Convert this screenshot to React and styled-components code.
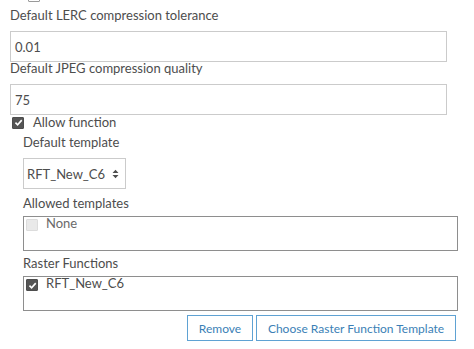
import React from "react";
import styled, { createGlobalStyle } from "styled-components";

const GlobalStyle = createGlobalStyle`
  body {
    margin: 0;
    background: #fff;
    color: #4d4d4d;
    font-family: Lato, "Open Sans", "Liberation Sans", sans-serif;
    font-size: 13px;
    overflow: hidden;
  }
`;

const Panel = styled.div`
  display: flex;
  flex-direction: column;
  align-items: flex-start;
  padding-left: 10px;
`;

const Box = styled.span`
  box-sizing: border-box;
  display: inline-flex;
  align-items: center;
  justify-content: center;
  flex: none;
  width: 12px;
  height: 12px;
  border: 1px solid ${(p) => (p.$checked ? "#4d4d4d" : p.$disabled ? "#dcdcdc" : "#9a9a9a")};
  background: ${(p) => (p.$checked ? "#555" : p.$disabled ? "#e9e9e9" : "#fff")};
  border-radius: 1px;
`;

const Check = ({ checked, disabled }) => (
  <Box $checked={checked} $disabled={disabled}>
    {checked && (
      <svg width="9" height="9" viewBox="0 0 10 10">
        <path d="M1.6 5.2 L4 7.6 L8.6 2.4" fill="none" stroke="#fff" strokeWidth="1.8" />
      </svg>
    )}
  </Box>
);

const TopCheck = styled.div`
  margin: -10px 0 0 18px;
  display: flex;
`;

const Label = styled.div`
  line-height: 13px;
  white-space: nowrap;
  margin-top: ${(p) => p.$top || 0}px;
  margin-bottom: ${(p) => p.$bottom ?? 9}px;
`;

const TextInput = styled.div`
  box-sizing: border-box;
  width: 437px;
  height: 31px;
  border: 1px solid #cbcbcb;
  padding-left: 4px;
  display: flex;
  align-items: center;
`;

const CheckRow = styled.label`
  display: flex;
  align-items: center;
  gap: 9px;
  margin: 1px 0 0 2px;
  line-height: 13px;
`;

const Nested = styled.div`
  display: flex;
  flex-direction: column;
  align-items: flex-start;
  margin-left: 13px;
  width: 435px;
`;

const Select = styled.div`
  box-sizing: border-box;
  width: 103px;
  height: 31px;
  border: 1px solid #cbcbcb;
  padding: 0 6px 0 3px;
  display: flex;
  align-items: center;
  justify-content: space-between;
`;

const List = styled.div`
  box-sizing: border-box;
  width: 435px;
  height: 35px;
  border: 1px solid #8e8e8e;
  padding: 0 2px;
`;

const ListItem = styled.div`
  display: flex;
  align-items: flex-start;
  gap: 8px;
  line-height: 13px;
  color: ${(p) => (p.$disabled ? "#6a6a6a" : "#4d4d4d")};

  & > span:first-child {
    margin-top: 2px;
  }
`;

const Actions = styled.div`
  align-self: stretch;
  display: flex;
  justify-content: flex-end;
  gap: 3px;
  margin: 4px 2px 0 0;
`;

const Button = styled.button`
  box-sizing: border-box;
  height: 26px;
  width: ${(p) => p.$w}px;
  padding: 0;
  white-space: nowrap;
  background: #fff;
  border: 1px solid #5fa2d3;
  color: #3b7fb6;
  font-family: inherit;
  font-size: 12px;
`;

const Arrows = () => (
  <svg width="7" height="10" viewBox="0 0 7 10">
    <path d="M0.5 4 L3.5 0.8 L6.5 4 Z M0.5 6 L3.5 9.2 L6.5 6 Z" fill="#4d4d4d" />
  </svg>
);

export default function App() {
  return (
    <>
      <GlobalStyle />
      <Panel>
        <TopCheck>
          <Check />
        </TopCheck>
        <Label $top={7}>Default LERC compression tolerance</Label>
        <TextInput>0.01</TextInput>
        <Label $top={0}>Default JPEG compression quality</Label>
        <TextInput>75</TextInput>
        <CheckRow>
          <Check checked />
          Allow function
        </CheckRow>
        <Nested>
          <Label $top={7}>Default template</Label>
          <Select>
            RFT_New_C6
            <Arrows />
          </Select>
          <Label $top={8} $bottom={6}>Allowed templates</Label>
          <List>
            <ListItem $disabled>
              <Check disabled />
              None
            </ListItem>
          </List>
          <Label $top={6} $bottom={6}>Raster Functions</Label>
          <List>
            <ListItem>
              <Check checked />
              RFT_New_C6
            </ListItem>
          </List>
          <Actions>
            <Button $w={66}>Remove</Button>
            <Button $w={200}>Choose Raster Function Template</Button>
          </Actions>
        </Nested>
      </Panel>
    </>
  );
}
